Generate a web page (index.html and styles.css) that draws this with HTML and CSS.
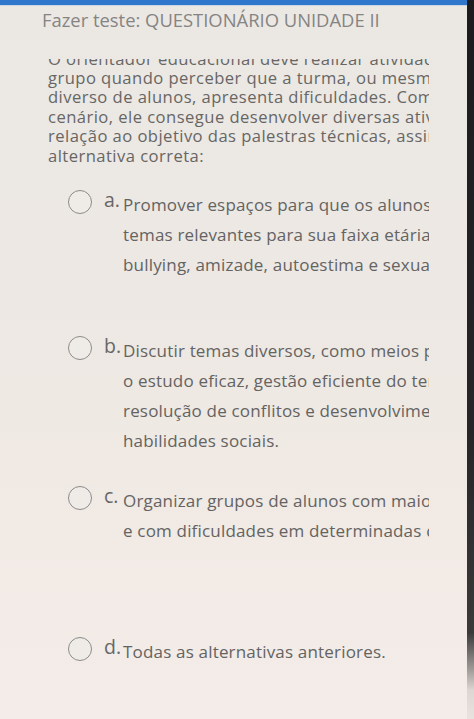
FILE: index.html
```html
<!DOCTYPE html>
<html lang="pt">
<head>
<meta charset="utf-8">
<title>Fazer teste: QUESTIONÁRIO UNIDADE II</title>
<link rel="stylesheet" href="styles.css">
</head>
<body>
<div class="screen">
  <div class="page">
    <div class="topbar"></div>
    <header class="header">
      <h1 class="title">Fazer teste: QUESTIONÁRIO UNIDADE II</h1>
    </header>
    <div class="clip">
      <div class="scroll">
        <p class="question">
          <span class="line">O orientador educacional deve realizar atividades em</span>
          <span class="line">grupo quando perceber que a turma, ou mesmo um grupo</span>
          <span class="line">diverso de alunos, apresenta dificuldades. Com base nesse</span>
          <span class="line">cenário, ele consegue desenvolver diversas atividades. Em</span>
          <span class="line">relação ao objetivo das palestras técnicas, assinale a</span>
          <span class="line">alternativa correta:</span>
        </p>
        <ul class="options">
          <li class="option option-a">
            <span class="radio"></span>
            <span class="label">a.</span>
            <span class="text">
              <span class="line">Promover espaços para que os alunos discutam</span>
              <span class="line">temas relevantes para sua faixa etária, como</span>
              <span class="line">bullying, amizade, autoestima e sexualidade.</span>
            </span>
          </li>
          <li class="option option-b">
            <span class="radio"></span>
            <span class="label">b.</span>
            <span class="text">
              <span class="line">Discutir temas diversos, como meios para</span>
              <span class="line">o estudo eficaz, gestão eficiente do tempo,</span>
              <span class="line">resolução de conflitos e desenvolvimento de</span>
              <span class="line">habilidades sociais.</span>
            </span>
          </li>
          <li class="option option-c">
            <span class="radio"></span>
            <span class="label">c.</span>
            <span class="text">
              <span class="line">Organizar grupos de alunos com maior facilidade</span>
              <span class="line">e com dificuldades em determinadas disciplinas.</span>
            </span>
          </li>
          <li class="option option-d">
            <span class="radio"></span>
            <span class="label">d.</span>
            <span class="text">
              <span class="line">Todas as alternativas anteriores.</span>
            </span>
          </li>
        </ul>
      </div>
    </div>
  </div>
  <div class="edge"></div>
</div>
</body>
</html>
```

FILE: styles.css
```css
* {
  box-sizing: border-box;
}

html, body {
  margin: 0;
  padding: 0;
}

body {
  width: 474px;
  height: 719px;
  overflow: hidden;
  font-family: "Open Sans", "Noto Sans", "DejaVu Sans", sans-serif;
  background: #ebe8e3;
}

.screen {
  display: flex;
  width: 474px;
  height: 719px;
}

.page {
  flex: 0 0 467px;
  display: flex;
  flex-direction: column;
  background: linear-gradient(180deg, #ebe8e3 0%, #ede8e3 40%, #f1eae5 75%, #f3ece8 100%);
}

.topbar {
  height: 5px;
  background: #2f77cc;
  border-bottom: 1px solid #c9d6e2;
  flex: 0 0 6px;
}

.header {
  flex: 0 0 53px;
  padding: 1px 0 0 42px;
}

.title {
  margin: 0;
  font-size: 18.4px;
  line-height: 26px;
  font-weight: 400;
  color: #858483;
  white-space: nowrap;
}

.clip {
  flex: 1 1 auto;
  width: 429px;
  overflow: hidden;
}

.scroll {
  margin-top: -10.4px;
  padding-left: 48px;
}

.line {
  display: block;
  white-space: nowrap;
}

.question {
  margin: 0;
  font-size: 16.6px;
  line-height: 19.4px;
  letter-spacing: 0.45px;
  color: #676665;
}

.options {
  list-style: none;
  margin: 25px 0 0;
  padding: 0 0 0 20px;
}

.option {
  display: flex;
  align-items: flex-start;
  font-size: 17px;
  line-height: 29.8px;
  letter-spacing: 0.18px;
  color: #646362;
}

.option-a { margin-bottom: 57px; }
.option-b { margin-bottom: 30.5px; }
.option-c { margin-bottom: 91px; }

.radio {
  flex: 0 0 24px;
  width: 24px;
  height: 24px;
  border: 1.5px solid #8c8b8a;
  border-radius: 50%;
  background: #efece8;
}

.label {
  flex: 0 0 19px;
  margin-left: 12px;
  font-size: 19.5px;
  line-height: 19px;
  letter-spacing: 0;
  color: #686766;
}

.text {
  display: block;
}

.edge {
  flex: 1 1 auto;
  background: linear-gradient(180deg, #1c1c1e 0%, #262628 60%, #3a3a3b 88%, #9c9896 93%, #ddd7d3 96%, #e9e3df 100%);
}
```
